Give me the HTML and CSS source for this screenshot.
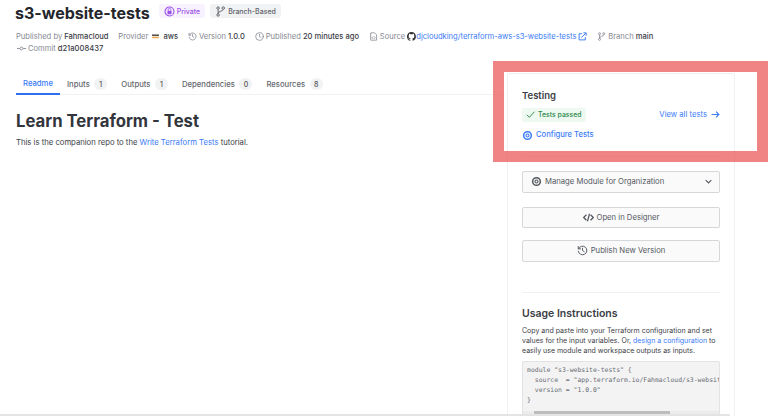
FILE: index.html
```html
<!DOCTYPE html>
<html lang="en">
<head>
<meta charset="utf-8">
<title>s3-website-tests</title>
<link rel="stylesheet" href="styles.css">
</head>
<body>
<svg class="defs" width="0" height="0" aria-hidden="true">
  <symbol id="branch" viewBox="0 0 16 16"><g fill="none" stroke="currentColor" stroke-width="1.4"><circle cx="4.5" cy="13" r="1.8"/><circle cx="4.5" cy="3" r="1.8" /><circle cx="12" cy="3" r="1.8"/><path d="M4.5 5v6M12 5c0 3-7.5 2-7.5 6"/></g></symbol>
  <symbol id="history" viewBox="0 0 16 16"><g fill="none" stroke="currentColor" stroke-width="1.4" stroke-linecap="round"><path d="M2.2 5.5A6.3 6.3 0 1 1 1.8 9"/><path d="M1.8 2.2v3.4h3.4M8 4.6V8l2.4 1.6"/></g></symbol>
  <symbol id="gear" viewBox="0 0 16 16"><g fill="none" stroke="currentColor"><circle cx="8" cy="8" r="2.2" stroke-width="1.6"/><circle cx="8" cy="8" r="5.6" stroke-width="2.2"/></g></symbol>
</svg>
<div class="page">
  <header class="head">
    <div class="title-row">
      <h1 class="title">s3-website-tests</h1>
      <span class="tag tag-private"><svg class="ico13" viewBox="0 0 16 16"><circle cx="8" cy="8" r="6.5" fill="none" stroke="currentColor" stroke-width="1.6"/><rect x="5" y="7" width="6" height="5" rx="1" fill="currentColor"/><path d="M6 7V5.5a2 2 0 0 1 4 0V7" fill="none" stroke="currentColor" stroke-width="1.2"/></svg>Private</span>
      <span class="tag tag-branch"><svg class="ico13"><use href="#branch"/></svg>Branch-Based</span>
    </div>
    <div class="meta">
      <span class="meta-item">Published by <b>Fahmacloud</b></span>
      <span class="meta-item">Provider <svg class="aws" viewBox="0 0 10 6"><rect width="10" height="2.4" fill="#555"/><rect y="3.4" width="10" height="2.2" rx="1" fill="#f4a64a"/></svg> <b>aws</b></span>
      <span class="meta-item"><svg class="ico10"><use href="#history"/></svg>Version <b>1.0.0</b></span>
      <span class="meta-item"><svg class="ico10" viewBox="0 0 16 16"><g fill="none" stroke="currentColor" stroke-width="1.4" stroke-linecap="round"><circle cx="8" cy="8" r="6.8"/><path d="M8 4v4.2l2.6 1.4"/></g></svg>Published <b>20 minutes ago</b></span>
      <span class="meta-item"><svg class="ico10" viewBox="0 0 16 16"><g fill="none" stroke="currentColor" stroke-width="1.4"><path d="M3 1.5h7l3.5 3.5v9.5H3z"/><path d="M7 8l-1.6 2L7 12M9.4 8l1.6 2-1.6 2"/></g></svg>Source <span class="source"><svg class="ico10 gh" viewBox="0 0 16 16"><path fill="#333" d="M8 0a8 8 0 0 0-2.5 15.6c.4.1.5-.2.5-.4v-1.4c-2.2.5-2.7-1-2.7-1-.4-.9-.9-1.200-.9-1.200-.7-.5.100-.5.100-.5.800.1 1.200.8 1.200.8.700 1.200 1.900.9 2.300.7.100-.5.300-.9.500-1.100-1.800-.2-3.600-.9-3.600-4 0-.9.300-1.600.8-2.100-.1-.2-.4-1 .1-2.100 0 0 .7-.2 2.200.8a7.600 7.600 0 0 1 4 0c1.500-1 2.200-.8 2.200-.8.400 1.100.2 1.900.1 2.100.5.600.8 1.300.8 2.100 0 3.100-1.900 3.700-3.700 3.900.3.300.6.800.6 1.500v2.200c0 .2.100.5.600.4A8 8 0 0 0 8 0z"/></svg><a class="link">djcloudking/terraform-aws-s3-website-tests</a><svg class="ico10 ext" viewBox="0 0 16 16"><g fill="none" stroke="currentColor" stroke-width="1.7"><path d="M7 3H2v11h11V9"/><path d="M6 10l8-8M9.500 1.500h5v5"/></g></svg></span></span>
      <span class="meta-item"><svg class="ico10"><use href="#branch"/></svg>Branch <b>main</b></span>
      <span class="meta-item commit"><svg class="ico10" viewBox="0 0 16 16"><g fill="none" stroke="currentColor" stroke-width="1.6"><circle cx="8" cy="8" r="2.600"/><path d="M0 8h5M11 8h5"/></g></svg>Commit <b>d21a008437</b></span>
    </div>
  </header>
  <div class="columns">
    <main class="main">
      <nav class="tabs">
        <a class="tab tab-active">Readme</a>
        <a class="tab">Inputs <span class="count">1</span></a>
        <a class="tab">Outputs <span class="count">1</span></a>
        <a class="tab">Dependencies <span class="count">0</span></a>
        <a class="tab">Resources <span class="count">8</span></a>
      </nav>
      <h2 class="readme-title">Learn Terraform - Test</h2>
      <p class="readme-text">This is the companion repo to the <a class="link">Write Terraform Tests</a> tutorial.</p>
    </main>
    <aside class="side">
      <section class="testing">
        <h3 class="side-title">Testing</h3>
        <div class="test-row">
          <span class="passed"><svg class="ico10" viewBox="0 0 16 16"><path d="M1.500 8.500l4.500 4.500 9-10" fill="none" stroke="currentColor" stroke-width="1.600"/></svg>Tests passed</span>
          <a class="link view-all">View all tests <svg class="ico10" viewBox="0 0 16 16"><path d="M1 8h13M9 3l5 5-5 5" fill="none" stroke="currentColor" stroke-width="2"/></svg></a>
        </div>
        <a class="link configure"><svg class="ico11"><use href="#gear"/></svg>Configure Tests</a>
      </section>
      <hr class="rule rule-top">
      <button class="btn btn-manage" type="button"><svg class="ico11"><use href="#gear"/></svg><span class="grow">Manage Module for Organization</span><svg class="ico10" viewBox="0 0 16 16"><path d="M3 5.500l5 5 5-5" fill="none" stroke="currentColor" stroke-width="2"/></svg></button>
      <button class="btn" type="button"><svg class="ico11" viewBox="0 0 16 16"><path d="M5 4L1 8l4 4M11 4l4 4-4 4M9.500 2.500l-3 11" fill="none" stroke="currentColor" stroke-width="1.800"/></svg>Open in Designer</button>
      <button class="btn btn-publish" type="button"><svg class="ico11"><use href="#history"/></svg>Publish New Version</button>
      <hr class="rule rule-mid">
      <h3 class="usage-title">Usage Instructions</h3>
      <p class="usage-text">Copy and paste into your Terraform configuration and set values for the input variables. Or, <a class="link">design a configuration</a> to easily use module and workspace outputs as inputs.</p>
      <div class="code">
        <pre class="code-text">module "s3-website-tests" {
  source  = "app.terraform.io/Fahmacloud/s3-website-tests/aws"
  version = "1.0.0"
}</pre>
        <div class="scroll"><span class="thumb"></span></div>
      </div>
    </aside>
  </div>
</div>
<div class="highlight"></div>
<div class="bottom-line"></div>
</body>
</html>
```
FILE: styles.css
```css
* { box-sizing: border-box; }
html, body { margin: 0; height: 100%; overflow: hidden; background: #fff; }
body { font-family: Inter, "Noto Sans", sans-serif; color: #3b3d45; font-size: 7.6px; }
.defs { position: absolute; }
.page { width: 768px; height: 416px; overflow: hidden; padding: 0 16px; }
b { font-weight: 500; color: #3b3d45; }
svg { flex: none; }
.ico10 { width: 9px; height: 9px; }
.ico11 { width: 11px; height: 11px; }
.ico13 { width: 11px; height: 11px; }
.link { color: #3b7bf6; }

.head { height: 61px; }
.title-row { display: flex; align-items: flex-start; height: 25px; margin-left: -1px; }
.title { margin: 0 9px 0 0; font-size: 16px; font-weight: 700; color: #24262c; line-height: 26px; }
.tag { display: inline-flex; align-items: center; gap: 2px; height: 14px; margin-top: 4px; padding: 0 5px; border-radius: 3px; font-size: 7px; font-weight: 500; }
.tag-private { background: #f8f1fe; color: #9a4fe8; margin-right: 5px; }
.tag-branch { background: #f1f2f3; color: #60636b; }
.meta { display: flex; flex-wrap: wrap; width: 650px; column-gap: 9.8px; row-gap: 2px; margin-top: 6.5px; color: #868991; line-height: 10px; }
.meta-item { display: inline-flex; align-items: center; gap: 2px; white-space: nowrap; }
.source { display: inline-flex; align-items: center; }
.ext { margin-left: 2px; color: #3b7bf6; }
.aws { width: 7px; height: 5px; margin: 0 2px; }
.commit { padding-left: 1px; }

.columns { display: flex; justify-content: space-between; }
.main { width: 489px; margin-top: 13px; }
.tabs { display: flex; align-items: center; height: 21px; border-bottom: 1px solid #f1f1f3; font-weight: 500; font-size: 7.7px; color: #63666e; column-gap: 14px; }
.tab { display: flex; align-items: center; gap: 4.5px; height: 21px; }
.tab-active { width: 44px; justify-content: center; color: #3b7bf6; border-bottom: 2px solid #2f6fee; margin-right: -7px; }
.count { display: inline-flex; align-items: center; justify-content: center; min-width: 13px; height: 12px; border-radius: 6px; background: #f1f2f3; font-size: 7px; color: #555; }
.readme-title { margin: 15px 0 0; font-size: 16.7px; line-height: 22px; font-weight: 700; color: #33353c; }
.readme-text { margin: 4.5px 0 0; font-size: 7.7px; line-height: 11px; color: #3b3d45; }

.side { width: 228px; height: 344px; margin: 12px 17px 0 0; border: 1px solid #f0f0f2; border-bottom: 0; border-radius: 3px 3px 0 0; padding: 16px 14px 0; display: flex; flex-direction: column; overflow: hidden; }
.side-title { margin: 0; font-size: 9.5px; line-height: 12px; font-weight: 600; color: #3b3d45; }
.test-row { display: flex; align-items: center; justify-content: space-between; margin-top: 5.5px; height: 14px; }
.passed { display: inline-flex; align-items: center; gap: 3px; height: 14px; padding: 0 4px; border-radius: 2px; background: #eef9f1; color: #2a8a4a; font-size: 6.9px; font-weight: 500; }
.view-all { display: inline-flex; align-items: center; gap: 4px; font-size: 7.7px; }
.configure { display: flex; align-items: center; gap: 3px; margin-top: 7.5px; line-height: 12px; font-size: 7.6px; font-weight: 500; }
.rule { width: 100%; height: 1px; border: 0; margin: 0; background: #f0f0f2; flex: none; }
.rule-top { margin-top: 15px; }
.btn { display: flex; align-items: center; justify-content: center; gap: 3px; width: 100%; height: 21.5px; flex: none; margin-top: 11px; padding: 0 5px; border: 1px solid #d6d7da; border-radius: 2px; background: #fafafa; color: #55585f; font: 400 7.7px Inter, sans-serif; }
.btn-manage { margin-top: 14px; justify-content: flex-start; padding: 0 6px 0 8px; margin-bottom: 3px; }
.btn-publish { margin-top: 12px; }
.grow { flex: 1; text-align: left; }
.rule-mid { margin-top: 30px; }
.usage-title { margin: 15px 0 0; font-size: 10.5px; line-height: 12px; font-weight: 600; color: #3b3d45; }
.usage-text { margin: 6px 0 0; font-size: 7px; line-height: 10px; color: #3b3d45; }
.code { margin-top: 5px; height: 56px; background: #f3f3f4; border: 1px solid #e3e3e5; border-radius: 2px; overflow: hidden; flex: none; position: relative; }
.code-text { margin: 0; padding: 3px 4px; font: 6.45px/10.3px "DejaVu Sans Mono", monospace; color: #6b6e75; white-space: pre; }
.scroll { position: absolute; left: 0; right: 0; bottom: 0; height: 5px; background: #ececee; }
.thumb { position: absolute; left: 11px; width: 136px; height: 5px; background: #bdbdc0; }

.highlight { position: absolute; left: 493px; top: 61px; width: 275px; height: 101px; border: 11px solid rgba(235, 90, 90, .75); }
.bottom-line { position: absolute; left: 0; bottom: 0; width: 730px; height: 2px; background: #e4e4e4; }
```
